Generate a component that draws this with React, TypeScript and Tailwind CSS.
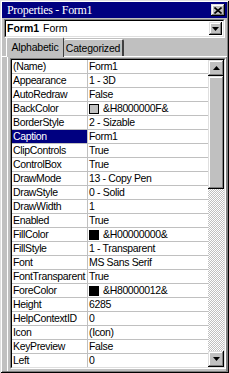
import React from 'react';

type Swatch = 'gray' | 'black' | undefined;

const rows: { name: string; value: string; swatch?: Swatch }[] = [
  { name: '(Name)', value: 'Form1' },
  { name: 'Appearance', value: '1 - 3D' },
  { name: 'AutoRedraw', value: 'False' },
  { name: 'BackColor', value: '&H8000000F&', swatch: 'gray' },
  { name: 'BorderStyle', value: '2 - Sizable' },
  { name: 'Caption', value: 'Form1' },
  { name: 'ClipControls', value: 'True' },
  { name: 'ControlBox', value: 'True' },
  { name: 'DrawMode', value: '13 - Copy Pen' },
  { name: 'DrawStyle', value: '0 - Solid' },
  { name: 'DrawWidth', value: '1' },
  { name: 'Enabled', value: 'True' },
  { name: 'FillColor', value: '&H00000000&', swatch: 'black' },
  { name: 'FillStyle', value: '1 - Transparent' },
  { name: 'Font', value: 'MS Sans Serif' },
  { name: 'FontTransparent', value: 'True' },
  { name: 'ForeColor', value: '&H80000012&', swatch: 'black' },
  { name: 'Height', value: '6285' },
  { name: 'HelpContextID', value: '0' },
  { name: 'Icon', value: '(Icon)' },
  { name: 'KeyPreview', value: 'False' },
  { name: 'Left', value: '0' },
];

const raised =
  'shadow-[inset_-1px_-1px_0_#000,inset_1px_1px_0_#dfdfdf,inset_-2px_-2px_0_#808080,inset_2px_2px_0_#fff]';

function Arrow({ up }: { up?: boolean }) {
  return (
    <svg width="7" height="4" viewBox="0 0 7 4" className={up ? '' : 'rotate-180'}>
      <path d="M3.5 0 L7 4 L0 4 Z" fill="#000" />
    </svg>
  );
}

function ScrollButton({ up }: { up?: boolean }) {
  return (
    <div className={`w-[16px] h-[16px] shrink-0 bg-[#c0c0c0] flex items-center justify-center ${raised}`}>
      <Arrow up={up} />
    </div>
  );
}

export default function App() {
  return (
    <div className="w-[229px] h-[373px] bg-[#c0c0c0] p-[2px] flex flex-col overflow-hidden font-['Liberation_Sans',Arial,sans-serif] text-black shadow-[inset_1px_1px_0_#dfdfdf,inset_-1px_-1px_0_#000,inset_2px_2px_0_#fff,inset_-2px_-2px_0_#808080]">
      {/* title bar */}
      <div className="h-[16px] shrink-0 bg-[#000080] flex items-center justify-between pl-[5px] pr-[2px]">
        <span className="text-white text-[12px] leading-none tracking-[-0.3px] font-['Liberation_Serif',serif]">Properties - Form1</span>
        <div className={`w-[14px] h-[12px] bg-[#c0c0c0] flex items-center justify-center ${raised}`}>
          <svg width="8" height="7" viewBox="0 0 8 7">
            <path d="M0.5 0.5 L7.5 6.5 M7.5 0.5 L0.5 6.5" stroke="#000" strokeWidth="1.6" />
          </svg>
        </div>
      </div>

      {/* object combo */}
      <div className="mt-[1px] mx-[2px] h-[19px] shrink-0 border border-t-[#808080] border-l-[#808080] border-r-white border-b-white">
        <div className="h-full border border-t-black border-l-black border-r-[#dfdfdf] border-b-[#dfdfdf] bg-white flex items-center pl-[1px] pr-[1px]">
          <span className="text-[10.5px] leading-none font-bold">Form1</span>
          <span className="text-[10.5px] leading-none ml-[4px]">Form</span>
          <div className="flex-1" />
          <div className={`w-[13px] h-[13px] bg-[#c0c0c0] flex items-center justify-center ${raised}`}>
            <Arrow />
          </div>
        </div>
      </div>

      {/* tabs */}
      <div className="h-[19px] shrink-0 flex items-end pl-[4px] border-b border-white">
        <div className="relative -mb-[1px] h-[20px] w-[58px] bg-[#c0c0c0] border-t border-l border-white border-r border-r-[#404040] rounded-t-[2px] flex items-center justify-center">
          <span className="text-[10.5px] leading-none tracking-[-0.2px]">Alphabetic</span>
        </div>
        <div className="h-[17px] w-[60px] bg-[#c0c0c0] border-t border-white border-r-2 border-r-[#404040] rounded-t-[2px] flex items-center justify-center">
          <span className="text-[10.5px] leading-none tracking-[-0.2px]">Categorized</span>
        </div>
      </div>

      {/* tab page */}
      <div className="flex-1 min-h-0 ml-[5px] flex flex-col pt-[1px] pl-[2px] pb-[2px] border-l border-white border-r border-r-[#808080]">
        <div className="flex-1 min-h-0 border border-t-[#808080] border-l-[#808080] border-r-white border-b-white">
          <div className="h-full flex border border-t-black border-l-black border-r-[#dfdfdf] border-b-[#dfdfdf] bg-white overflow-hidden">
            <div className="w-[196px] flex flex-col overflow-hidden">
              {rows.map((r) => {
                const selected = r.name === 'Caption';
                return (
                  <div key={r.name} className="h-[14px] shrink-0 flex border-b border-[#c0c0c0] text-[10.5px] leading-none tracking-[-0.35px]">
                    <div
                      className={`w-[75px] shrink-0 flex items-center pl-[1px] overflow-hidden whitespace-nowrap ${
                        selected ? 'bg-[#000080] text-white' : ''
                      }`}
                    >
                      {r.name}
                    </div>
                    <div className="w-[1px] bg-[#c0c0c0]" />
                    <div className="flex-1 flex items-center pl-[1px] whitespace-nowrap">
                      {r.swatch && (
                        <span
                          className={`w-[10px] h-[10px] mr-[4px] border border-black ${
                            r.swatch === 'gray' ? 'bg-[#c0c0c0]' : 'bg-black'
                          }`}
                        />
                      )}
                      {r.value}
                    </div>
                  </div>
                );
              })}
            </div>

            {/* scrollbar */}
            <div className="w-[16px] flex flex-col bg-[image:repeating-conic-gradient(#c0c0c0_0%_25%,#ffffff_0%_50%)] bg-[length:2px_2px]">
              <ScrollButton up />
              <div className={`h-[113px] shrink-0 bg-[#c0c0c0] ${raised}`} />
              <div className="flex-1" />
              <ScrollButton />
            </div>
          </div>
        </div>
      </div>
    </div>
  );
}
